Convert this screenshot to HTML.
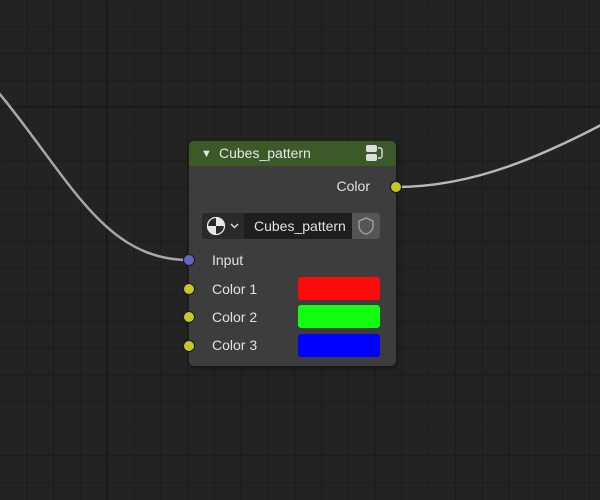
<!DOCTYPE html>
<html><head><style>
body{margin:0;width:600px;height:500px;overflow:hidden;background:#232323;font-family:"Liberation Sans",sans-serif;}
#bg{position:absolute;left:0;top:0;width:600px;height:500px;
background-image:
linear-gradient(to right,transparent 106px,#181818 106px,#181818 107.5px,transparent 107.5px),
linear-gradient(to bottom,transparent 106px,#181818 106px,#181818 107.5px,transparent 107.5px),
linear-gradient(to right,#1c1c1c 1px,transparent 1px),
linear-gradient(to bottom,#1c1c1c 1px,transparent 1px);
background-size:600px 500px,600px 500px,26.8px 26.8px,26.8px 26.8px;
background-position:0 0,0 0,-0.5px 0,0 -0.5px;}
.node{position:absolute;left:189px;top:141px;width:207px;height:225px;background:#3d3d3d;border-radius:5px;box-shadow:1px 2px 4px rgba(0,0,0,.5);}
.hdr{height:25px;background:#3c5a29;border-radius:5px 5px 0 0;color:#e6e6e6;font-size:14px;line-height:25px;}
.t{position:absolute;color:#e0e0e0;font-size:14px;}
.sock{position:absolute;width:10px;height:10px;border-radius:50%;border:1px solid #1a1a1a;}
.sw{position:absolute;left:109px;width:82px;height:23px;border-radius:3px;}
</style></head><body>
<div id="bg"></div>
<svg style="position:absolute;left:0;top:0" width="600" height="500">
<path d="M -40,50 C 60,150 90,260 189,260" stroke="#a8a8a8" stroke-width="2.5" fill="none"/>
<path d="M 396,187 C 470,187 540,160 640,104" stroke="#b8b8b8" stroke-width="2.5" fill="none"/>
</svg>
<div class="node">
<div class="hdr"><span style="position:absolute;left:12px;top:1px;font-size:11px">▼</span><span style="position:absolute;left:30px">Cubes_pattern</span>
<svg style="position:absolute;left:176px;top:3px" width="18" height="19"><rect x="1" y="1" width="11" height="7" rx="2" fill="#ddd"/><rect x="1" y="10" width="11" height="7" rx="2" fill="#ddd"/><path d="M13 4 h2 a2 2 0 0 1 2 2 v6 a2 2 0 0 1 -2 2 h-2" stroke="#ddd" stroke-width="1.4" fill="none"/></svg></div>
<div class="t" style="right:26px;top:37px">Color</div>
<div style="position:absolute;left:13px;top:72px;width:178px;height:26px;background:#2a2a2a;border-radius:3px;"></div>
<div style="position:absolute;left:55px;top:72px;width:108px;height:26px;background:#1e1e1e;"></div>
<div style="position:absolute;left:163px;top:72px;width:28px;height:26px;background:#555;border-radius:0 3px 3px 0;"></div>
<svg style="position:absolute;left:17px;top:75px" width="38" height="20"><circle cx="10" cy="10" r="8.5" fill="#e6e6e6"/><path d="M10 10 V1.5 A8.5 8.5 0 0 0 1.5 10 Z M10 10 H18.5 A8.5 8.5 0 0 1 10 18.5 Z" fill="#2a2a2a"/><circle cx="10" cy="10" r="8.5" fill="none" stroke="#e6e6e6" stroke-width="1.3"/><path d="M25 8 l3.5 3.5 l3.5 -3.5" stroke="#ddd" stroke-width="1.4" fill="none"/></svg>
<div class="t" style="left:65px;top:77px">Cubes_pattern</div>
<svg style="position:absolute;left:168px;top:75px" width="18" height="20"><path d="M9 2 L16 5 V10 C16 14 13 17 9 18 C5 17 2 14 2 10 V5 Z" stroke="#9a9a9a" stroke-width="1.5" fill="none"/></svg>
<div class="t" style="left:23px;top:111px">Input</div>
<div class="t" style="left:23px;top:140px">Color 1</div>
<div class="t" style="left:23px;top:168px">Color 2</div>
<div class="t" style="left:23px;top:196px">Color 3</div>
<div class="sw" style="top:136px;background:#ff0a0a"></div>
<div class="sw" style="top:164px;background:#12ff12"></div>
<div class="sw" style="top:193px;background:#0000ff"></div>
</div>
<div class="sock" style="left:390px;top:181px;background:#c7c729"></div>
<div class="sock" style="left:183px;top:254px;background:#6363c7"></div>
<div class="sock" style="left:183px;top:283px;background:#c7c729"></div>
<div class="sock" style="left:183px;top:311px;background:#c7c729"></div>
<div class="sock" style="left:183px;top:340px;background:#c7c729"></div>
</body></html>
